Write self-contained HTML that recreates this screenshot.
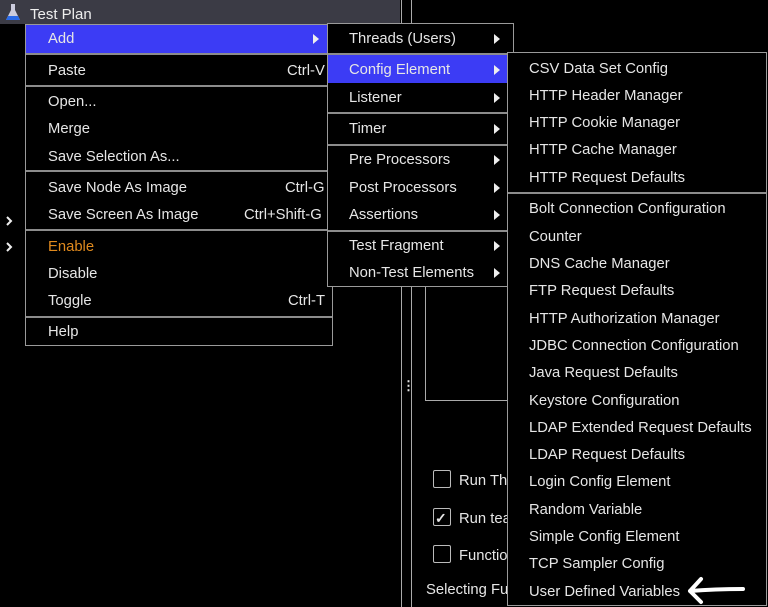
<!DOCTYPE html>
<html><head><meta charset="utf-8"><style>
*{margin:0;padding:0;box-sizing:border-box}
body{width:768px;height:607px;background:#000;position:relative;overflow:hidden;font-family:"Liberation Sans",sans-serif;font-size:14.8px;color:#e6e6e6}
.a{position:absolute}
.t{position:absolute;white-space:nowrap;line-height:18px;margin-top:1px}
.menu{position:absolute;background:#000;border:1px solid #9a9a9a}
.sep{position:absolute;left:0;right:0;height:2px;background:#8c8c8c}
.hl{position:absolute;background:#3c3cf5}
.arr{position:absolute;width:0;height:0;border-top:5px solid transparent;border-bottom:5px solid transparent;border-left:6px solid #eee}
.cb{position:absolute;width:18px;height:18px;border:1.5px solid #bbb;border-radius:2px}
.vl{position:absolute;width:1px;background:#aaa}
</style></head><body>
<div class="a" style="left:0;top:0;width:400px;height:24px;background:#3b3b45"></div>
<svg class="a" style="left:5px;top:3px" width="16" height="20"><path d="M6 1h4v6l5 10H1l5-10z" fill="#ccd" /><path d="M3 13h10l2 4H1z" fill="#2a6ae8"/></svg>
<div class="t" style="left:30px;top:5px;color:#eee;font-size:15px">Test Plan</div>
<div class="vl" style="left:401px;top:0;height:607px"></div>
<div class="vl" style="left:411px;top:0;height:607px"></div>
<div class="a" style="left:425px;top:280px;width:90px;height:121px;border-left:1px solid #aaa;border-bottom:1px solid #aaa"></div>
<div class="t" style="left:402px;top:376px;font-size:13px;font-weight:bold">⋮</div>
<svg class="a" style="left:4px;top:216px" width="10" height="40"><path d="M3 1l4 4-4 4M3 27l4 4-4 4" stroke="#eee" stroke-width="2" fill="none"/></svg>
<div class="cb" style="left:433px;top:470px"></div>
<div class="cb" style="left:433px;top:508px"></div>
<div class="t" style="left:435px;top:508px;font-size:14px;font-weight:bold">✓</div>
<div class="cb" style="left:433px;top:545px"></div>
<div class="t" style="left:459px;top:471px">Run Th</div>
<div class="t" style="left:459px;top:509px">Run tea</div>
<div class="t" style="left:459px;top:546px">Functio</div>
<div class="t" style="left:426px;top:580px">Selecting Fu</div>

<!-- menu 1 -->
<div class="menu" style="left:25px;top:24px;width:308px;height:322px">
<div class="hl" style="left:0;top:0;width:302px;height:28px"></div>
<div class="arr" style="left:287px;top:9px"></div>
<div class="sep" style="top:28px"></div>
<div class="sep" style="top:60px"></div>
<div class="sep" style="top:145px"></div>
<div class="sep" style="top:204px"></div>
<div class="sep" style="top:291px"></div>
</div>
<div class="t" style="left:48px;top:29px">Add</div>
<div class="t" style="left:48px;top:61px">Paste</div><div class="t" style="left:287px;top:61px">Ctrl-V</div>
<div class="t" style="left:48px;top:92px">Open...</div>
<div class="t" style="left:48px;top:119px">Merge</div>
<div class="t" style="left:48px;top:147px">Save Selection As...</div>
<div class="t" style="left:48px;top:178px">Save Node As Image</div><div class="t" style="left:285px;top:178px">Ctrl-G</div>
<div class="t" style="left:48px;top:205px">Save Screen As Image</div><div class="t" style="left:244px;top:205px">Ctrl+Shift-G</div>
<div class="t" style="left:48px;top:237px;color:#e08a1e">Enable</div>
<div class="t" style="left:48px;top:264px">Disable</div>
<div class="t" style="left:48px;top:291px">Toggle</div><div class="t" style="left:288px;top:291px">Ctrl-T</div>
<div class="t" style="left:48px;top:322px">Help</div>

<!-- menu 2 -->
<div class="menu" style="left:327px;top:23px;width:187px;height:264px">
<div class="sep" style="top:29px"></div>
<div class="hl" style="left:0;top:31px;width:180px;height:28px"></div>
<div class="sep" style="top:88px"></div>
<div class="sep" style="top:120px"></div>
<div class="sep" style="top:206px"></div>
<div class="arr" style="left:166px;top:10px"></div>
<div class="arr" style="left:166px;top:41px"></div>
<div class="arr" style="left:166px;top:69px"></div>
<div class="arr" style="left:166px;top:100px"></div>
<div class="arr" style="left:166px;top:131px"></div>
<div class="arr" style="left:166px;top:159px"></div>
<div class="arr" style="left:166px;top:186px"></div>
<div class="arr" style="left:166px;top:217px"></div>
<div class="arr" style="left:166px;top:244px"></div>
</div>
<div class="t" style="left:349px;top:29px">Threads (Users)</div>
<div class="t" style="left:349px;top:60px">Config Element</div>
<div class="t" style="left:349px;top:88px">Listener</div>
<div class="t" style="left:349px;top:119px">Timer</div>
<div class="t" style="left:349px;top:150px">Pre Processors</div>
<div class="t" style="left:349px;top:178px">Post Processors</div>
<div class="t" style="left:349px;top:205px">Assertions</div>
<div class="t" style="left:349px;top:236px">Test Fragment</div>
<div class="t" style="left:349px;top:263px">Non-Test Elements</div>

<!-- menu 3 -->
<div class="menu" style="left:507px;top:52px;width:260px;height:554px">
<div class="sep" style="top:139px"></div>
</div>
<div class="t" style="left:529px;top:59px">CSV Data Set Config</div>
<div class="t" style="left:529px;top:86px">HTTP Header Manager</div>
<div class="t" style="left:529px;top:113px">HTTP Cookie Manager</div>
<div class="t" style="left:529px;top:140px">HTTP Cache Manager</div>
<div class="t" style="left:529px;top:168px">HTTP Request Defaults</div>
<div class="t" style="left:529px;top:199px">Bolt Connection Configuration</div>
<div class="t" style="left:529px;top:227px">Counter</div>
<div class="t" style="left:529px;top:254px">DNS Cache Manager</div>
<div class="t" style="left:529px;top:281px">FTP Request Defaults</div>
<div class="t" style="left:529px;top:309px">HTTP Authorization Manager</div>
<div class="t" style="left:529px;top:336px">JDBC Connection Configuration</div>
<div class="t" style="left:529px;top:363px">Java Request Defaults</div>
<div class="t" style="left:529px;top:391px">Keystore Configuration</div>
<div class="t" style="left:529px;top:418px">LDAP Extended Request Defaults</div>
<div class="t" style="left:529px;top:445px">LDAP Request Defaults</div>
<div class="t" style="left:529px;top:472px">Login Config Element</div>
<div class="t" style="left:529px;top:500px">Random Variable</div>
<div class="t" style="left:529px;top:527px">Simple Config Element</div>
<div class="t" style="left:529px;top:554px">TCP Sampler Config</div>
<div class="t" style="left:529px;top:582px">User Defined Variables</div>
<svg class="a" style="left:680px;top:572px" width="70" height="35"><path d="M10 19 Q35 17 63 17 M21 7 L10 19 L21 30" stroke="#fff" stroke-width="4" fill="none" stroke-linecap="round" stroke-linejoin="round"/></svg>
</body></html>
